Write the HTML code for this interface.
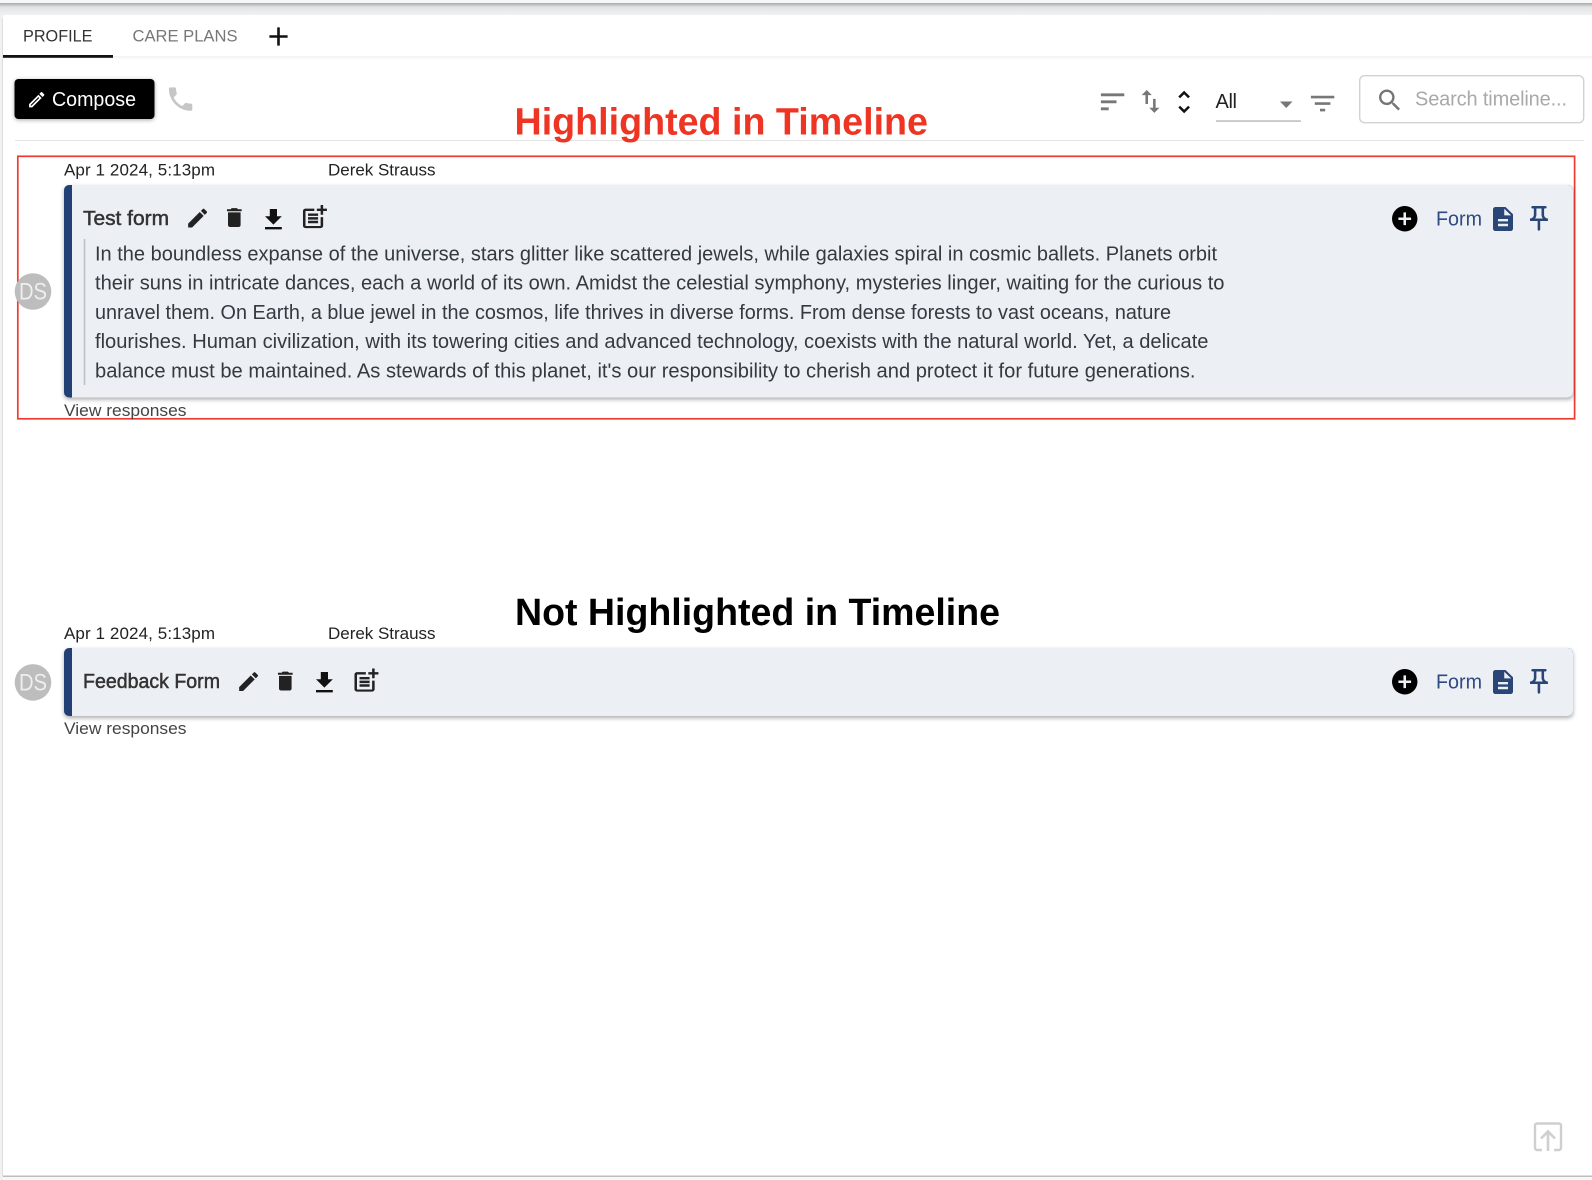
<!DOCTYPE html>
<html lang="en">
<head>
<meta charset="utf-8">
<title>Timeline</title>
<style>
html,body{margin:0;padding:0;width:1592px;height:1180px;overflow:hidden;background:#f8f8f9}
svg{display:block;position:absolute;left:0;top:0}
text{font-family:"Liberation Sans",sans-serif;white-space:pre}
.b{font-size:20px;fill:#333a40}
.d{font-size:17px;fill:#222}
.v{font-size:17px;fill:#444}
.t{font-size:20.5px;fill:#333;stroke:#333;stroke-width:.5px}
.h{font-size:38px;font-weight:700}
.f{font-size:20px;fill:#2f4a80}
</style>
</head>
<body>
<svg width="1592" height="1180" viewBox="0 0 1592 1180" xmlns="http://www.w3.org/2000/svg">
<defs>
<linearGradient id="top" x1="0" y1="0" x2="0" y2="1">
<stop offset="0" stop-color="#a9a9a9"/><stop offset=".35" stop-color="#e2e3e5"/><stop offset="1" stop-color="#f1f2f4"/>
</linearGradient>
<linearGradient id="tabs" x1="0" y1="0" x2="0" y2="1">
<stop offset="0" stop-color="#f3f3f3"/><stop offset="1" stop-color="#ffffff"/>
</linearGradient>
<path id="edit" d="M3 17.25V21h3.75L17.81 9.94l-3.75-3.75L3 17.25zM20.71 7.04c.39-.39.39-1.02 0-1.41l-2.34-2.34c-.39-.39-1.02-.39-1.41 0l-1.83 1.83 3.75 3.75 1.83-1.83z"/>
<path id="del" d="M6 19c0 1.1.9 2 2 2h8c1.1 0 2-.9 2-2V7H6v12zM19 4h-3.5l-1-1h-5l-1 1H5v2h14V4z"/>
<path id="dl" d="M19 9h-4V3H9v6H5l7 7 7-7zM5 18v2h14v-2H5z"/>
<path id="post" d="M17 19.22H5V7h7V5H5c-1.1 0-2 .9-2 2v12c0 1.1.9 2 2 2h12c1.1 0 2-.9 2-2v-7h-2v7.22zM19 2h-2v3h-3c.01.01 0 2 0 2h3v2.99c.01.01 2 0 2 0V7h3V5h-3V2zM7 9h8v2H7zM7 12v2h8v-2zM7 15h8v2H7z"/>
<path id="addc" d="M12 2C6.48 2 2 6.48 2 12s4.48 10 10 10 10-4.48 10-10S17.52 2 12 2zm5 11h-4v4h-2v-4H7v-2h4V7h2v4h4v2z"/>
<path id="desc" d="M14 2H6c-1.1 0-1.99.9-1.99 2L4 20c0 1.1.89 2 1.99 2H18c1.1 0 2-.9 2-2V8l-6-6zm2 16H8v-2h8v2zm0-4H8v-2h8v2zm-3-5V3.5L18.5 9H13z"/>
<path id="pin" d="M14 4v5c0 1.12.37 2.16 1 3H9c.65-.86 1-1.9 1-3V4h4M17 2H7c-.55 0-1 .45-1 1s.45 1 1 1l1 0v5c0 1.66-1.34 3-3 3v2h5.97v7l1 1 1-1v-7H19v-2c-1.66 0-3-1.34-3-3V4l1 0c.55 0 1-.45 1-1s-.45-1-1-1z"/>
</defs>

<!-- page frame -->
<rect x="0" y="0" width="1592" height="3" fill="#f6f6f6"/>
<rect x="0" y="3" width="1592" height="12" fill="url(#top)"/>
<rect x="0" y="15" width="3" height="1165" fill="#f1f1f2"/>
<rect x="2.5" y="15" width="1590" height="1161" rx="3" fill="#fff"/>
<rect x="3" y="1175.5" width="1589" height="1.5" fill="#bdbdbd"/>
<rect x="2" y="18" width="1" height="1158" fill="#dedede"/>

<!-- tabs -->
<rect x="3" y="56" width="1589" height="4" fill="url(#tabs)"/>
<text x="23" y="41.7" font-size="17" fill="#333" textLength="69.500" lengthAdjust="spacingAndGlyphs">PROFILE</text>
<text x="132.5" y="41.7" font-size="17" fill="#777" textLength="105" lengthAdjust="spacingAndGlyphs">CARE PLANS</text>
<rect x="3" y="55" width="110" height="2.8" fill="#111"/>
<path transform="translate(262.9 20.9) scale(1.3)" fill="#111" d="M19 13h-6v6h-2v-6H5v-2h6V5h2v6h6v2z"/>

<!-- compose -->
<rect x="14.5" y="79" width="140" height="40" rx="4" fill="#000" style="filter:drop-shadow(0 1px 2px rgba(0,0,0,.35))"/>
<path transform="translate(26.5 89.5) scale(.85)" fill="#fff" d="M14.06 9.02l.92.92L5.92 19H5v-.92l9.06-9.06M17.66 3c-.25 0-.51.1-.7.29l-1.83 1.83 3.75 3.75 1.83-1.83c.39-.39.39-1.02 0-1.41l-2.34-2.34c-.2-.2-.45-.29-.71-.29zm-3.6 3.19L3 17.25V21h3.75L17.81 9.94l-3.75-3.75z"/>
<text x="52" y="105.8" font-size="20" fill="#fff" textLength="84" lengthAdjust="spacingAndGlyphs">Compose</text>
<path transform="translate(165 83.500) scale(1.3)" fill="#c6c6c6" d="M6.62 10.79c1.44 2.83 3.76 5.14 6.59 6.59l2.2-2.2c.27-.27.67-.36 1.02-.24 1.12.37 2.33.57 3.57.57.55 0 1 .45 1 1V20c0 .55-.45 1-1 1-9.39 0-17-7.61-17-17 0-.55.45-1 1-1h3.5c.55 0 1 .45 1 1 0 1.25.2 2.45.57 3.57.11.35.03.74-.25 1.02l-2.2 2.2z"/>

<!-- toolbar -->
<path transform="translate(1097 85) scale(1.3 1.4)" fill="#777" d="M3 18h6v-2H3v2zM3 6v2h18V6H3zm0 7h12v-2H3v2z"/>
<path transform="translate(1135.3 86.2) scale(1.27)" fill="#777" d="M16 17.01V10h-2v7.01h-3L15 21l4-3.99h-3zM9 3L5 6.99h3V14h2V6.99h3L9 3z"/>
<path transform="translate(1168.9 87) scale(1.27 1.25)" fill="#111" d="M12 5.83L15.17 9l1.41-1.41L12 3 7.41 7.59 8.83 9 12 5.83zm0 12.34L8.83 15l-1.41 1.41L12 21l4.59-4.59L15.17 15 12 18.17z"/>
<text x="1215.5" y="108" font-size="20" fill="#222" textLength="21.500">All</text>
<path d="M1280 101.5h12.5l-6.25 6.5z" fill="#757575"/>
<rect x="1216" y="120.3" width="85" height="1.5" fill="#bbb"/>
<path transform="translate(1307 88) scale(1.3)" fill="#777" d="M10 18h4v-2h-4v2zM3 6v2h18V6H3zm3 7h12v-2H6v2z"/>
<rect x="1359.7" y="75.7" width="224" height="47" rx="5" fill="#fff" stroke="#d2d2d2" stroke-width="1.4"/>
<path transform="translate(1375.4 85.9) scale(1.2)" fill="#757575" d="M15.5 14h-.79l-.28-.27C15.41 12.59 16 11.11 16 9.5 16 5.91 13.09 3 9.5 3S3 5.91 3 9.5 5.91 16 9.5 16c1.61 0 3.09-.59 4.23-1.57l.27.28v.79l5 4.99L20.49 19l-4.99-5zm-6 0C7.01 14 5 11.99 5 9.5S7.01 5 9.5 5 14 7.01 14 9.5 11.99 14 9.5 14z"/>
<text x="1415" y="105.700" font-size="20" fill="#a9a9a9" textLength="152">Search timeline...</text>
<rect x="15" y="140" width="1569" height="1" fill="#e4e4e4"/>

<!-- annotations -->
<text class="h" x="514.5" y="134.5" fill="#ee3524" textLength="413.500" lengthAdjust="spacingAndGlyphs">Highlighted in Timeline</text>
<text class="h" x="515" y="625.2" fill="#000" textLength="485" lengthAdjust="spacingAndGlyphs">Not Highlighted in Timeline</text>
<rect x="17.8" y="156.3" width="1556.8" height="262.5" fill="none" stroke="#f03a2e" stroke-width="1.7"/>

<!-- item 1 -->
<circle cx="33" cy="291.5" r="18.3" fill="#bdbdbd"/>
<text x="19" y="299.5" font-size="24" fill="#eee" textLength="28" lengthAdjust="spacingAndGlyphs">DS</text>
<text class="d" x="64" y="175.6" textLength="151">Apr 1 2024, 5:13pm</text>
<text class="d" x="328" y="175.6" textLength="107.500">Derek Strauss</text>
<g style="filter:drop-shadow(0 2px 2px rgba(0,0,0,.33))">
<rect x="64" y="185" width="1509" height="212.5" rx="5" fill="#234075"/>
<path d="M72 185H1568a5 5 0 0 1 5 5V392.5a5 5 0 0 1-5 5H72z" fill="#eceff4"/>
</g>
<text class="t" x="83" y="225" textLength="86" lengthAdjust="spacingAndGlyphs">Test form</text>
<use href="#edit" transform="translate(185 205.5) scale(1.05)" fill="#222"/>
<use href="#del" transform="translate(221.7 205) scale(1.05)" fill="#222"/>
<use href="#dl" transform="translate(259 205.4) scale(1.2)" fill="#111"/>
<use href="#post" transform="translate(299.2 202.5) scale(1.26 1.22)" fill="#222"/>
<rect x="83.7" y="239" width="1.6" height="146" fill="#bfc0c2"/>
<text class="b" x="95" y="260.300" textLength="1122" lengthAdjust="spacingAndGlyphs">In the boundless expanse of the universe, stars glitter like scattered jewels, while galaxies spiral in cosmic ballets. Planets orbit</text>
<text class="b" x="95" y="289.6" textLength="1129.5" lengthAdjust="spacingAndGlyphs">their suns in intricate dances, each a world of its own. Amidst the celestial symphony, mysteries linger, waiting for the curious to</text>
<text class="b" x="95" y="319" textLength="1076" lengthAdjust="spacingAndGlyphs">unravel them. On Earth, a blue jewel in the cosmos, life thrives in diverse forms. From dense forests to vast oceans, nature</text>
<text class="b" x="95" y="348.2" textLength="1113.5" lengthAdjust="spacingAndGlyphs">flourishes. Human civilization, with its towering cities and advanced technology, coexists with the natural world. Yet, a delicate</text>
<text class="b" x="95" y="377.5" textLength="1100.5" lengthAdjust="spacingAndGlyphs">balance must be maintained. As stewards of this planet, it's our responsibility to cherish and protect it for future generations.</text>
<use href="#addc" transform="translate(1389.5 203.5) scale(1.27)" fill="#000"/>
<text class="f" x="1436" y="225.3" textLength="46" lengthAdjust="spacingAndGlyphs">Form</text>
<use href="#desc" transform="translate(1488 204.6) scale(1.25 1.2)" fill="#2a4677"/>
<use href="#pin" transform="translate(1523.6 203.5) scale(1.28 1.25)" fill="#2a4677"/>
<text class="v" x="64" y="416" textLength="122.500" lengthAdjust="spacingAndGlyphs">View responses</text>

<!-- item 2 -->
<circle cx="33" cy="682.4" r="18.3" fill="#bdbdbd"/>
<text x="19" y="690.4" font-size="24" fill="#eee" textLength="28" lengthAdjust="spacingAndGlyphs">DS</text>
<text class="d" x="64" y="639" textLength="151">Apr 1 2024, 5:13pm</text>
<text class="d" x="328" y="639" textLength="107.500">Derek Strauss</text>
<g style="filter:drop-shadow(0 2px 2px rgba(0,0,0,.33))">
<rect x="64" y="648" width="1509" height="68" rx="5" fill="#234075"/>
<path d="M72 648H1568a5 5 0 0 1 5 5V711a5 5 0 0 1-5 5H72z" fill="#eceff4"/>
</g>
<text class="t" x="83" y="688" textLength="137" lengthAdjust="spacingAndGlyphs">Feedback Form</text>
<use href="#edit" transform="translate(236 669) scale(1.05)" fill="#222"/>
<use href="#del" transform="translate(272.7 668.5) scale(1.05)" fill="#222"/>
<use href="#dl" transform="translate(310 668.4) scale(1.2)" fill="#111"/>
<use href="#post" transform="translate(350.7 666) scale(1.26 1.22)" fill="#222"/>
<use href="#addc" transform="translate(1389.5 666.5) scale(1.27)" fill="#000"/>
<text class="f" x="1436" y="688.3" textLength="46" lengthAdjust="spacingAndGlyphs">Form</text>
<use href="#desc" transform="translate(1488 667.6) scale(1.25 1.2)" fill="#2a4677"/>
<use href="#pin" transform="translate(1523.6 666.5) scale(1.28 1.25)" fill="#2a4677"/>
<text class="v" x="64" y="734" textLength="122.500" lengthAdjust="spacingAndGlyphs">View responses</text>

<!-- scroll to top -->
<path d="M1542 1150h-5a2 2 0 0 1-2-2v-22.500a2 2 0 0 1 2-2h22a2 2 0 0 1 2 2v22.500a2 2 0 0 1-2 2h-5" fill="none" stroke="#cfcfcf" stroke-width="2.4"/>
<path d="M1548 1151v-19M1541 1138.500l7-7 7 7" fill="none" stroke="#cfcfcf" stroke-width="2.6"/>
</svg>
</body>
</html>
